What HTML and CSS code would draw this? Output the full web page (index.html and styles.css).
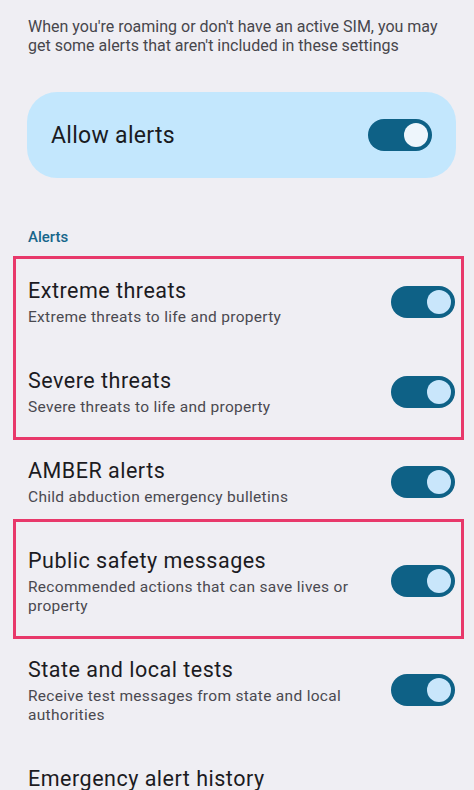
FILE: index.html
```html
<!DOCTYPE html>
<html lang="en">
<head>
<meta charset="utf-8">
<title>Wireless emergency alerts</title>
<link rel="stylesheet" href="styles.css">
</head>
<body>
<main class="page">
  <p class="intro">When you're roaming or don't have an active SIM, you may get some alerts that aren't included in these settings</p>

  <div class="master">
    <span class="master-label">Allow alerts</span>
    <span class="switch switch-master"><span class="knob"></span></span>
  </div>

  <h2 class="section">Alerts</h2>

  <div class="highlight highlight-a">
    <div class="row">
      <div class="text">
        <div class="title">Extreme threats</div>
        <div class="summary">Extreme threats to life and property</div>
      </div>
      <span class="switch"><span class="knob"></span></span>
    </div>
    <div class="row">
      <div class="text">
        <div class="title">Severe threats</div>
        <div class="summary">Severe threats to life and property</div>
      </div>
      <span class="switch"><span class="knob"></span></span>
    </div>
  </div>

  <div class="row">
    <div class="text">
      <div class="title">AMBER alerts</div>
      <div class="summary">Child abduction emergency bulletins</div>
    </div>
    <span class="switch"><span class="knob"></span></span>
  </div>

  <div class="highlight highlight-b">
    <div class="row">
      <div class="text">
        <div class="title">Public safety messages</div>
        <div class="summary">Recommended actions that can save lives or property</div>
      </div>
      <span class="switch"><span class="knob"></span></span>
    </div>
  </div>

  <div class="row">
    <div class="text">
      <div class="title">State and local tests</div>
      <div class="summary">Receive test messages from state and local authorities</div>
    </div>
    <span class="switch"><span class="knob"></span></span>
  </div>

  <div class="row">
    <div class="text">
      <div class="title">Emergency alert history</div>
    </div>
  </div>
</main>
</body>
</html>
```

FILE: styles.css
```css
html, body {
  margin: 0;
  padding: 0;
  background: #efeef3;
}

body {
  font-family: Roboto, "Noto Sans", "Liberation Sans", sans-serif;
  color: #1c1b1f;
  overflow: hidden;
}

.page {
  display: flex;
  flex-direction: column;
}

.intro {
  margin: 0;
  padding: 17px 24px 0 28px;
  font-size: 16px;
  line-height: 19px;
  color: #47464c;
}

.master {
  margin: 37px 18px 0 27px;
  height: 86px;
  border-radius: 30px;
  background: #c3e7fd;
  display: flex;
  align-items: center;
  justify-content: space-between;
  padding: 0 24px 0 24px;
  box-sizing: border-box;
}

.master-label {
  font-size: 23px;
  letter-spacing: 0.3px;
  color: #1a1b1f;
}

.section {
  margin: 0;
  padding: 49px 28px 7px;
  font-size: 15px;
  line-height: 20px;
  font-weight: 500;
  color: #17668b;
}

.row {
  display: flex;
  align-items: center;
  justify-content: space-between;
  padding: 21px 19px 17px 28px;
  gap: 20px;
}

.text {
  flex: 1;
  min-width: 0;
  padding-top: 2px;
}

.title {
  font-size: 21.5px;
  line-height: 28px;
  letter-spacing: 0.5px;
  color: #1c1b1f;
}

.summary {
  margin-top: 3px;
  font-size: 15.5px;
  line-height: 19px;
  letter-spacing: 0.3px;
  color: #4a4950;
  padding-right: 8px;
}

.switch {
  flex: none;
  width: 64px;
  height: 32px;
  margin-top: 1px;
  border-radius: 16px;
  background: #0e6186;
  display: flex;
  align-items: center;
  justify-content: flex-end;
  padding: 0 4px;
  box-sizing: border-box;
}

.switch-master {
  margin-top: 0;
}

.knob {
  width: 24px;
  height: 24px;
  border-radius: 50%;
  background: #c9e6fb;
}

.switch-master .knob {
  background: #eef6fc;
}

.highlight {
  position: relative;
}

.highlight::after {
  content: "";
  position: absolute;
  left: 13px;
  right: 10px;
  border: 3px solid #e8386a;
  pointer-events: none;
}

.highlight-a::after {
  top: 2px;
  bottom: -6px;
}

.highlight-b::after {
  top: -5px;
  bottom: -6px;
}
```
